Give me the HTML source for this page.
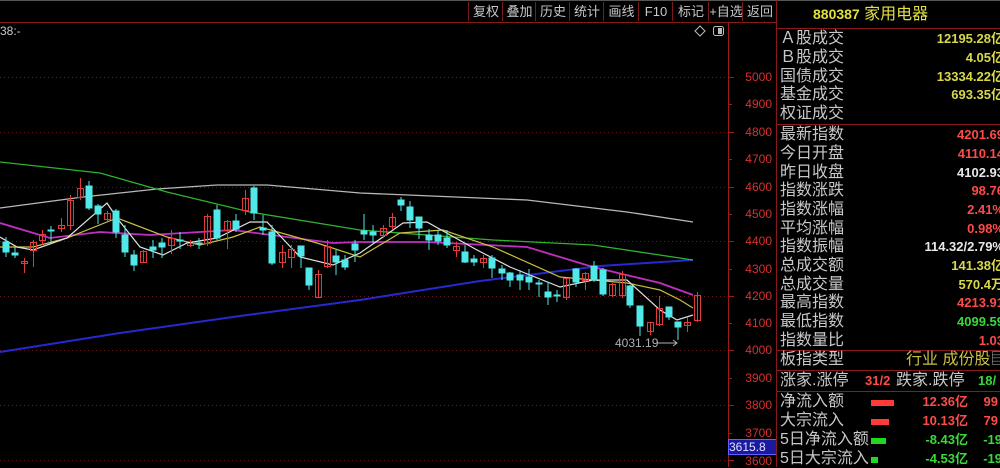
<!DOCTYPE html>
<html><head><meta charset="utf-8">
<style>
body{margin:0;background:#000;width:1000px;height:467px;overflow:hidden;position:relative;font-family:"Liberation Sans","Noto Sans CJK SC",sans-serif;}
.tb{position:absolute;top:2px;height:19px;color:#c8c8c8;font-size:13px;line-height:19px;text-align:center;border-left:1px solid #7a1a1a;}
.lbl{position:absolute;left:780px;color:#c8c8c8;font-size:16px;line-height:18px;white-space:nowrap;}
.val{position:absolute;right:-4px;font-size:13px;font-weight:bold;line-height:18px;white-space:nowrap;}
.y{color:#d8d84a}.r{color:#ff4a4a}.w{color:#e8e8e8}.g{color:#3ad83a}
.ax{position:absolute;left:740px;width:32px;text-align:right;color:#d83030;font-size:12px;line-height:12px;}
.hl{position:absolute;left:777px;width:223px;height:1px;background:#8a1a1a;}
</style></head><body>
<div style="position:absolute;left:0;top:0;width:1000px;height:1px;background:#555"></div>
<div style="position:absolute;left:0;top:22px;width:777px;height:1px;background:#8a1a1a"></div>
<div class="tb" style="left:468px;width:34px">复权</div>
<div class="tb" style="left:502px;width:33px">叠加</div>
<div class="tb" style="left:535px;width:34px">历史</div>
<div class="tb" style="left:569px;width:34px">统计</div>
<div class="tb" style="left:603px;width:35px">画线</div>
<div class="tb" style="left:638px;width:34px">F10</div>
<div class="tb" style="left:672px;width:36px">标记</div>
<div class="tb" style="left:708px;width:34px">+自选</div>
<div class="tb" style="left:742px;width:34px">返回</div>
<div style="position:absolute;left:0;top:24px;color:#c8c8c8;font-size:12px">38:-</div>

<svg style="position:absolute;left:0;top:0" width="777" height="467">
<g stroke="#6a1c1c" stroke-dasharray="1,3" stroke-width="1">
<line x1="0" y1="77.5" x2="725" y2="77.5"/><line x1="0" y1="132.5" x2="725" y2="132.5"/><line x1="0" y1="187.5" x2="725" y2="187.5"/><line x1="0" y1="241.5" x2="725" y2="241.5"/><line x1="0" y1="296.5" x2="725" y2="296.5"/><line x1="0" y1="350.5" x2="725" y2="350.5"/><line x1="0" y1="405.5" x2="725" y2="405.5"/><line x1="0" y1="460.5" x2="725" y2="460.5"/>
</g>
<line x1="728.5" y1="22" x2="728.5" y2="467" stroke="#a01a1a"/>
<g stroke="#a01a1a">
<line x1="728" y1="77.5" x2="734" y2="77.5"/><line x1="728" y1="104.5" x2="732" y2="104.5"/><line x1="728" y1="132.5" x2="734" y2="132.5"/><line x1="728" y1="159.5" x2="732" y2="159.5"/><line x1="728" y1="187.5" x2="734" y2="187.5"/><line x1="728" y1="214.5" x2="732" y2="214.5"/><line x1="728" y1="241.5" x2="734" y2="241.5"/><line x1="728" y1="269.5" x2="732" y2="269.5"/><line x1="728" y1="296.5" x2="734" y2="296.5"/><line x1="728" y1="323.5" x2="732" y2="323.5"/><line x1="728" y1="350.5" x2="734" y2="350.5"/><line x1="728" y1="378.5" x2="732" y2="378.5"/><line x1="728" y1="405.5" x2="734" y2="405.5"/><line x1="728" y1="433.5" x2="732" y2="433.5"/><line x1="728" y1="460.5" x2="734" y2="460.5"/>
</g>
<path d="M695,31 l5,-5 l5,5 l-5,5z" fill="none" stroke="#bbb"/>
<rect x="713.5" y="26.5" width="10" height="9" rx="2" fill="none" stroke="#bbb"/><rect x="718" y="28" width="4" height="6" fill="#bbb"/>
<path d="M0,352 L120,333 L240,316 L360,300 L480,281 L600,266 L693,260" stroke="#2828d0" stroke-width="2" fill="none"/>
<path d="M0,208 L83,197 L157,189 L217,185 L267,185 L360,193 L527,200 L627,212 L693,222" stroke="#b8b8b8" stroke-width="1.3" fill="none"/>
<path d="M0,162 L100,173 L167,192 L250,212 L360,230 L493,240 L593,245 L693,260" stroke="#30b030" stroke-width="1.3" fill="none"/>
<path d="M0,223 L50,238 L100,232 L150,235 L183,233 L233,230 L333,243 L360,242 L427,242 L527,247 L593,267 L660,283 L693,295" stroke="#c030c0" stroke-width="1.8" fill="none"/>
<path d="M0,247 L33,247 L67,238 L117,218 L167,237 L200,245 L233,237 L260,227 L317,243 L360,257 L400,233 L443,230 L493,247 L560,277 L627,283 L660,290 L680,300 L693,308" stroke="#c8c040" stroke-width="1.2" fill="none"/>
<path d="M0,237 L17,247 L33,250 L67,238 L107,203 L117,218 L140,247 L163,255 L187,243 L217,238 L250,222 L267,222 L300,257 L333,265 L360,253 L403,223 L427,222 L477,250 L510,267 L560,287 L593,280 L627,280 L660,310 L677,320 L693,315" stroke="#e0e0e0" stroke-width="1.2" fill="none"/>
<g stroke="#50e8e8" fill="#50e8e8">
<line x1="6" y1="237" x2="6" y2="257"/><rect x="3" y="242" width="6" height="10"/>
<line x1="15" y1="247" x2="15" y2="258"/><rect x="12" y="253" width="6" height="2"/>
<line x1="51" y1="226" x2="51" y2="243"/><rect x="48" y="230" width="6" height="1"/>
<line x1="89" y1="181" x2="89" y2="210"/><rect x="86" y="186" width="6" height="22"/>
<line x1="98" y1="204" x2="98" y2="224"/><rect x="95" y="206" width="6" height="8"/>
<line x1="116" y1="209" x2="116" y2="238"/><rect x="113" y="211" width="6" height="21"/>
<line x1="125" y1="225" x2="125" y2="257"/><rect x="122" y="235" width="6" height="17"/>
<line x1="134" y1="250" x2="134" y2="271"/><rect x="131" y="255" width="6" height="10"/>
<line x1="153" y1="240" x2="153" y2="258"/><rect x="150" y="247" width="6" height="3"/>
<line x1="162" y1="238" x2="162" y2="258"/><rect x="159" y="243" width="6" height="4"/>
<line x1="180" y1="232" x2="180" y2="249"/><rect x="177" y="240" width="6" height="1"/>
<line x1="199" y1="238" x2="199" y2="249"/><rect x="196" y="243" width="6" height="1"/>
<line x1="217" y1="205" x2="217" y2="240"/><rect x="214" y="210" width="6" height="28"/>
<line x1="236" y1="214" x2="236" y2="232"/><rect x="233" y="221" width="6" height="8"/>
<line x1="254" y1="186" x2="254" y2="220"/><rect x="251" y="188" width="6" height="25"/>
<line x1="263" y1="215" x2="263" y2="235"/><rect x="260" y="228" width="6" height="2"/>
<line x1="272" y1="225" x2="272" y2="265"/><rect x="269" y="232" width="6" height="31"/>
<line x1="301" y1="246" x2="301" y2="268"/><rect x="298" y="246" width="6" height="10"/>
<line x1="309" y1="268" x2="309" y2="290"/><rect x="306" y="268" width="6" height="17"/>
<line x1="336" y1="250" x2="336" y2="275"/><rect x="333" y="256" width="6" height="6"/>
<line x1="345" y1="255" x2="345" y2="270"/><rect x="342" y="260" width="6" height="7"/>
<line x1="355" y1="240" x2="355" y2="262"/><rect x="352" y="244" width="6" height="6"/>
<line x1="364" y1="214" x2="364" y2="240"/><rect x="361" y="231" width="6" height="3"/>
<line x1="373" y1="225" x2="373" y2="243"/><rect x="370" y="232" width="6" height="3"/>
<line x1="401" y1="197" x2="401" y2="211"/><rect x="398" y="200" width="6" height="5"/>
<line x1="410" y1="201" x2="410" y2="228"/><rect x="407" y="207" width="6" height="13"/>
<line x1="419" y1="217" x2="419" y2="239"/><rect x="416" y="217" width="6" height="11"/>
<line x1="429" y1="229" x2="429" y2="250"/><rect x="426" y="235" width="6" height="5"/>
<line x1="438" y1="230" x2="438" y2="245"/><rect x="435" y="235" width="6" height="6"/>
<line x1="447" y1="230" x2="447" y2="248"/><rect x="444" y="238" width="6" height="7"/>
<line x1="465" y1="245" x2="465" y2="263"/><rect x="462" y="252" width="6" height="10"/>
<line x1="474" y1="255" x2="474" y2="266"/><rect x="471" y="259" width="6" height="3"/>
<line x1="492" y1="255" x2="492" y2="278"/><rect x="489" y="258" width="6" height="10"/>
<line x1="502" y1="265" x2="502" y2="280"/><rect x="499" y="269" width="6" height="4"/>
<line x1="510" y1="272" x2="510" y2="287"/><rect x="507" y="273" width="6" height="7"/>
<line x1="520" y1="270" x2="520" y2="290"/><rect x="517" y="275" width="6" height="5"/>
<line x1="529" y1="269" x2="529" y2="290"/><rect x="526" y="277" width="6" height="5"/>
<line x1="539" y1="280" x2="539" y2="297"/><rect x="536" y="283" width="6" height="1"/>
<line x1="548" y1="282" x2="548" y2="305"/><rect x="545" y="292" width="6" height="5"/>
<line x1="557" y1="290" x2="557" y2="302"/><rect x="554" y="295" width="6" height="1"/>
<line x1="576" y1="268" x2="576" y2="287"/><rect x="573" y="269" width="6" height="13"/>
<line x1="594" y1="261" x2="594" y2="282"/><rect x="591" y="266" width="6" height="14"/>
<line x1="603" y1="268" x2="603" y2="296"/><rect x="600" y="270" width="6" height="24"/>
<line x1="630" y1="285" x2="630" y2="308"/><rect x="627" y="286" width="6" height="19"/>
<line x1="640" y1="306" x2="640" y2="336"/><rect x="637" y="306" width="6" height="20"/>
<line x1="669" y1="307" x2="669" y2="320"/><rect x="666" y="307" width="6" height="10"/>
<line x1="678" y1="322" x2="678" y2="340"/><rect x="675" y="322" width="6" height="5"/>
</g>
<g stroke="#e03a3a" fill="none">
<line x1="24.5" y1="258" x2="24.5" y2="273"/><rect x="21.5" y="261.5" width="6" height="2"/>
<line x1="33.5" y1="240" x2="33.5" y2="267"/><rect x="30.5" y="242.5" width="6" height="8"/>
<line x1="42.5" y1="230" x2="42.5" y2="245"/><rect x="39.5" y="234.5" width="6" height="6"/>
<line x1="61.5" y1="218" x2="61.5" y2="232"/><rect x="58.5" y="225.5" width="6" height="3"/>
<line x1="70.5" y1="195" x2="70.5" y2="230"/><rect x="67.5" y="200.5" width="6" height="25"/>
<line x1="80.5" y1="178" x2="80.5" y2="200"/><rect x="77.5" y="188.5" width="6" height="9"/>
<line x1="107.5" y1="211" x2="107.5" y2="221"/><rect x="104.5" y="213.5" width="6" height="6"/>
<line x1="143.5" y1="250" x2="143.5" y2="263"/><rect x="140.5" y="251.5" width="6" height="11"/>
<line x1="171.5" y1="230" x2="171.5" y2="254"/><rect x="168.5" y="238.5" width="6" height="7"/>
<line x1="190.5" y1="240" x2="190.5" y2="247"/><rect x="187.5" y="243.5" width="6" height="2"/>
<line x1="207.5" y1="214" x2="207.5" y2="246"/><rect x="204.5" y="216.5" width="6" height="27"/>
<line x1="227.5" y1="220" x2="227.5" y2="249"/><rect x="224.5" y="221.5" width="6" height="9"/>
<line x1="245.5" y1="190" x2="245.5" y2="215"/><rect x="242.5" y="198.5" width="6" height="12"/>
<line x1="282.5" y1="245" x2="282.5" y2="268"/><rect x="279.5" y="252.5" width="6" height="10"/>
<line x1="291.5" y1="245" x2="291.5" y2="268"/><rect x="288.5" y="249.5" width="6" height="8"/>
<line x1="318.5" y1="270" x2="318.5" y2="298"/><rect x="315.5" y="274.5" width="6" height="23"/>
<line x1="327.5" y1="240" x2="327.5" y2="268"/><rect x="324.5" y="246.5" width="6" height="20"/>
<line x1="383.5" y1="225" x2="383.5" y2="238"/><rect x="380.5" y="228.5" width="6" height="7"/>
<line x1="392.5" y1="213" x2="392.5" y2="230"/><rect x="389.5" y="217.5" width="6" height="9"/>
<line x1="456.5" y1="242" x2="456.5" y2="257"/><rect x="453.5" y="246.5" width="6" height="4"/>
<line x1="483.5" y1="255" x2="483.5" y2="268"/><rect x="480.5" y="258.5" width="6" height="4"/>
<line x1="566.5" y1="278" x2="566.5" y2="300"/><rect x="563.5" y="278.5" width="6" height="19"/>
<line x1="585.5" y1="272" x2="585.5" y2="290"/><rect x="582.5" y="273.5" width="6" height="7"/>
<line x1="612.5" y1="283" x2="612.5" y2="297"/><rect x="609.5" y="284.5" width="6" height="11"/>
<line x1="622.5" y1="271" x2="622.5" y2="298"/><rect x="619.5" y="274.5" width="6" height="21"/>
<line x1="650.5" y1="322" x2="650.5" y2="335"/><rect x="647.5" y="322.5" width="6" height="9"/>
<line x1="659.5" y1="296" x2="659.5" y2="326"/><rect x="656.5" y="308.5" width="6" height="16"/>
<line x1="687.5" y1="317" x2="687.5" y2="332"/><rect x="684.5" y="322.5" width="6" height="3"/>
<line x1="697.5" y1="292" x2="697.5" y2="322"/><rect x="694.5" y="295.5" width="6" height="25"/>
</g>
<text x="615" y="347" fill="#b0b0b0" font-size="12" font-family="Liberation Sans,sans-serif">4031.19</text>
<path d="M657,343 H677 M673,340 L677,343 L673,346" stroke="#b0b0b0" fill="none"/>
</svg>

<div class="ax" style="top:71px">5000</div><div class="ax" style="top:98px">4900</div><div class="ax" style="top:126px">4800</div><div class="ax" style="top:153px">4700</div><div class="ax" style="top:181px">4600</div><div class="ax" style="top:208px">4500</div><div class="ax" style="top:235px">4400</div><div class="ax" style="top:263px">4300</div><div class="ax" style="top:290px">4200</div><div class="ax" style="top:317px">4100</div><div class="ax" style="top:344px">4000</div><div class="ax" style="top:372px">3900</div><div class="ax" style="top:399px">3800</div><div class="ax" style="top:427px">3700</div><div class="ax" style="top:455px">3600</div>
<div style="position:absolute;left:728px;top:439px;width:47px;height:14px;background:#1a1aa0;border:1px solid #6060ff;color:#e0e0ff;font-size:12px;line-height:14px;">3615.8</div>

<div style="position:absolute;left:776px;top:0;width:1px;height:467px;background:#8a1a1a"></div>
<div class="hl" style="top:28px"></div>
<div style="position:absolute;left:813px;top:4px;font-size:16px;color:#e0e040;line-height:20px"><b style="font-size:14px">880387</b> 家用电器</div>
<div class="lbl" style="top:30px">Ａ股成交</div><div class="val y" style="top:30px">12195.28亿</div>
<div class="lbl" style="top:49px">Ｂ股成交</div><div class="val y" style="top:49px">4.05亿</div>
<div class="lbl" style="top:68px">国债成交</div><div class="val y" style="top:68px">13334.22亿</div>
<div class="lbl" style="top:86px">基金成交</div><div class="val y" style="top:86px">693.35亿</div>
<div class="lbl" style="top:105px">权证成交</div>
<div class="hl" style="top:124px"></div>
<div class="lbl" style="top:126px">最新指数</div><div class="val r" style="top:126px">4201.69</div>
<div class="lbl" style="top:145px">今日开盘</div><div class="val r" style="top:145px">4110.14</div>
<div class="lbl" style="top:164px">昨日收盘</div><div class="val w" style="top:164px">4102.93</div>
<div class="lbl" style="top:182px">指数涨跌</div><div class="val r" style="top:182px">98.76</div>
<div class="lbl" style="top:201px">指数涨幅</div><div class="val r" style="top:201px">2.41%</div>
<div class="lbl" style="top:220px">平均涨幅</div><div class="val r" style="top:220px">0.98%</div>
<div class="lbl" style="top:238px">指数振幅</div><div class="val w" style="top:238px">114.32/2.79%</div>
<div class="lbl" style="top:257px">总成交额</div><div class="val y" style="top:257px">141.38亿</div>
<div class="lbl" style="top:276px">总成交量</div><div class="val y" style="top:276px">570.4万</div>
<div class="lbl" style="top:294px">最高指数</div><div class="val r" style="top:294px">4213.91</div>
<div class="lbl" style="top:313px">最低指数</div><div class="val g" style="top:313px">4099.59</div>
<div class="lbl" style="top:332px">指数量比</div><div class="val r" style="top:332px">1.03</div>
<div class="hl" style="top:350px"></div>
<div class="lbl" style="top:351px">板指类型</div><div style="position:absolute;left:906px;top:351px;color:#c8c040;font-size:16px;line-height:18px;white-space:nowrap">行业 成份股<span style="color:#999">▤</span></div>
<div class="hl" style="top:370px"></div>
<div class="lbl" style="top:372px">涨家.涨停</div><div style="position:absolute;left:865px;top:372px;color:#ff4a4a;font-size:13px;font-weight:bold;line-height:18px">31/2</div>
<div style="position:absolute;left:896px;top:372px;color:#c8c8c8;font-size:16px;line-height:18px">跌家.跌停</div><div style="position:absolute;left:978px;top:372px;color:#3ad83a;font-size:13px;font-weight:bold;line-height:18px">18/</div>
<div class="hl" style="top:391px"></div>
<div class="lbl" style="top:393px">净流入额</div><div style="position:absolute;left:871px;top:400px;width:23px;height:6px;background:#ff3a3a"></div><div class="val r" style="top:393px;right:32px">12.36亿</div><div class="val r" style="top:393px;right:2px">99</div>
<div class="lbl" style="top:412px">大宗流入</div><div style="position:absolute;left:871px;top:419px;width:18px;height:6px;background:#ff3a3a"></div><div class="val r" style="top:412px;right:32px">10.13亿</div><div class="val r" style="top:412px;right:2px">79</div>
<div class="lbl" style="top:431px">5日净流入额</div><div style="position:absolute;left:871px;top:438px;width:15px;height:6px;background:#20d820"></div><div class="val g" style="top:431px;right:32px">-8.43亿</div><div class="val g" style="top:431px;right:-2px">-19</div>
<div class="lbl" style="top:450px">5日大宗流入</div><div style="position:absolute;left:871px;top:457px;width:7px;height:6px;background:#20d820"></div><div class="val g" style="top:450px;right:32px">-4.53亿</div><div class="val g" style="top:450px;right:-2px">-19</div>
</body></html>
